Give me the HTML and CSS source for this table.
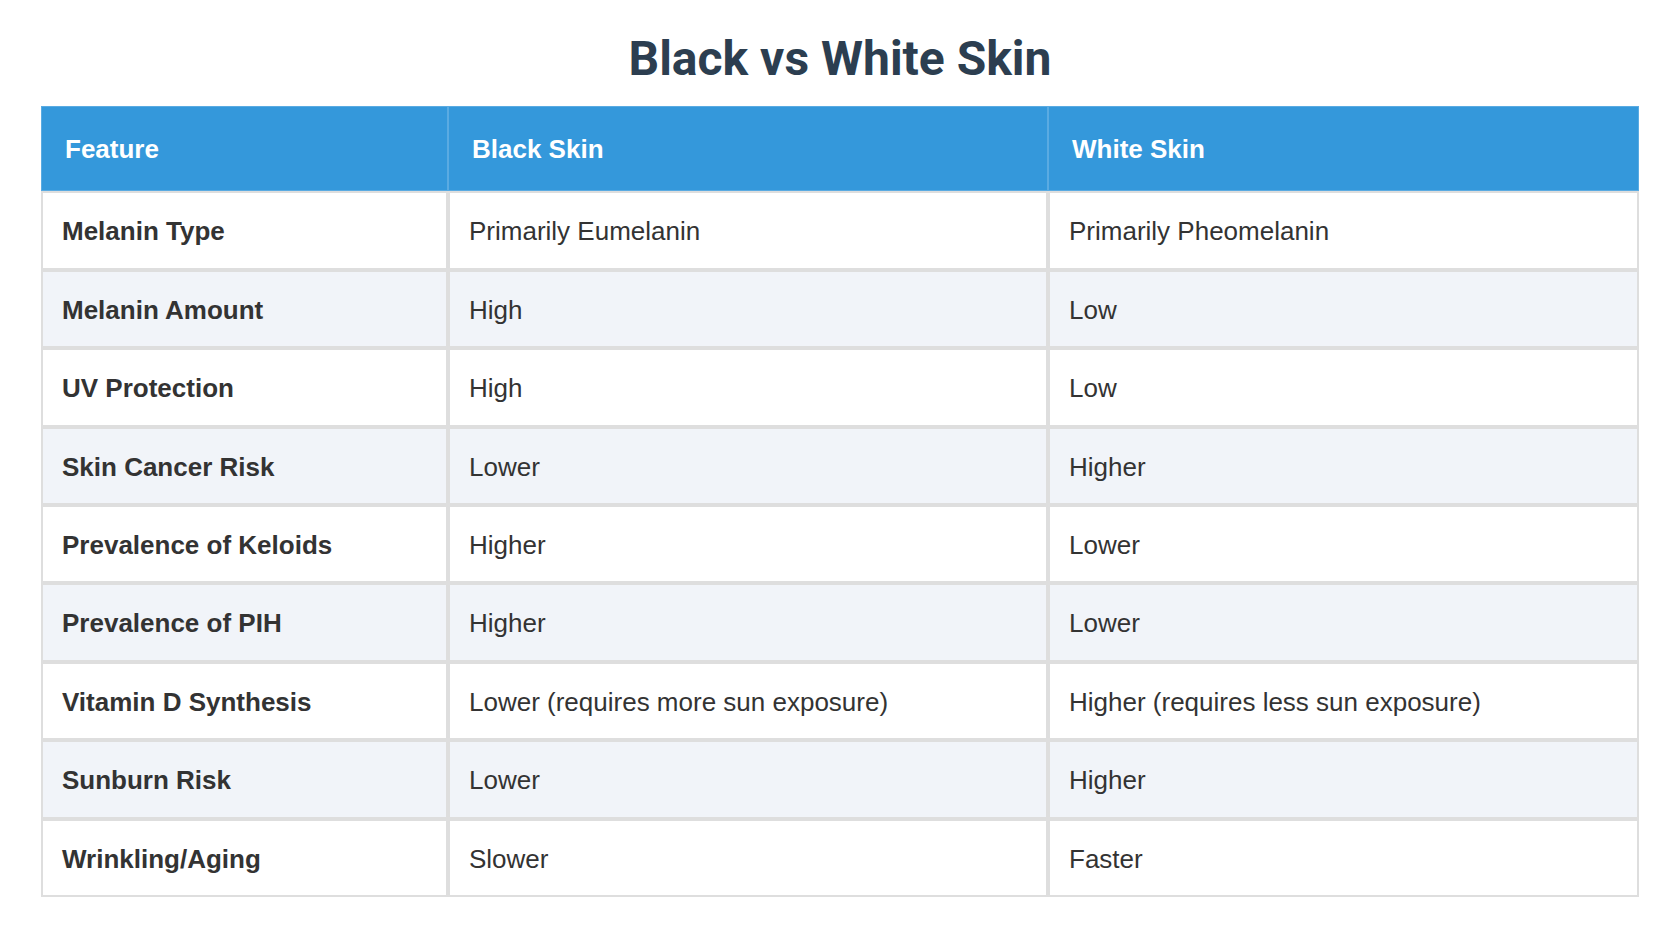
FILE: index.html
```html
<!DOCTYPE html>
<html lang="en">
<head>
<meta charset="utf-8">
<title>Black vs White Skin</title>
<link rel="stylesheet" href="styles.css">
</head>
<body>
<main class="page">
  <h1 class="title">Black vs White Skin</h1>
  <table class="compare">
    <thead>
      <tr>
        <th class="col-feature">Feature</th>
        <th class="col-black">Black Skin</th>
        <th class="col-white">White Skin</th>
      </tr>
    </thead>
    <tbody>
      <tr><td class="feature">Melanin Type</td><td>Primarily Eumelanin</td><td>Primarily Pheomelanin</td></tr>
      <tr><td class="feature">Melanin Amount</td><td>High</td><td>Low</td></tr>
      <tr><td class="feature">UV Protection</td><td>High</td><td>Low</td></tr>
      <tr><td class="feature">Skin Cancer Risk</td><td>Lower</td><td>Higher</td></tr>
      <tr><td class="feature">Prevalence of Keloids</td><td>Higher</td><td>Lower</td></tr>
      <tr><td class="feature">Prevalence of PIH</td><td>Higher</td><td>Lower</td></tr>
      <tr><td class="feature">Vitamin D Synthesis</td><td>Lower (requires more sun exposure)</td><td>Higher (requires less sun exposure)</td></tr>
      <tr><td class="feature">Sunburn Risk</td><td>Lower</td><td>Higher</td></tr>
      <tr><td class="feature">Wrinkling/Aging</td><td>Slower</td><td>Faster</td></tr>
    </tbody>
  </table>
</main>
</body>
</html>
```

FILE: styles.css
```css
html, body {
  margin: 0;
  padding: 0;
  background: #ffffff;
}

body {
  font-family: "Liberation Sans", Arial, sans-serif;
  color: #333333;
}

.page {
  padding: 0 41px;
}

.title {
  margin: 31px 0 20px;
  font-family: Roboto, "Liberation Sans", sans-serif;
  font-weight: 700;
  font-size: 48px;
  line-height: 55px;
  color: #2c3e50;
  text-align: center;
}

.compare {
  width: 1598px;
  table-layout: fixed;
  border-collapse: separate;
  border-spacing: 0;
  font-size: 26px;
  line-height: 29.4px;
}

.compare th,
.compare td {
  box-sizing: border-box;
  text-align: left;
  vertical-align: middle;
}

.compare th {
  background: #3498db;
  color: #ffffff;
  font-weight: 700;
  padding: 28px 22px 26px 23px;
  border: 1px solid #5aabe2;
}

.col-feature { width: 407px; }
.col-black { width: 600px; }

.compare td {
  padding: 24px 18px 21px 19px;
  border: 2px solid #dedede;
  background: #ffffff;
}

.compare tbody tr:nth-child(even) td {
  background: #f1f4f9;
}

.compare td.feature {
  font-weight: 700;
}
```
